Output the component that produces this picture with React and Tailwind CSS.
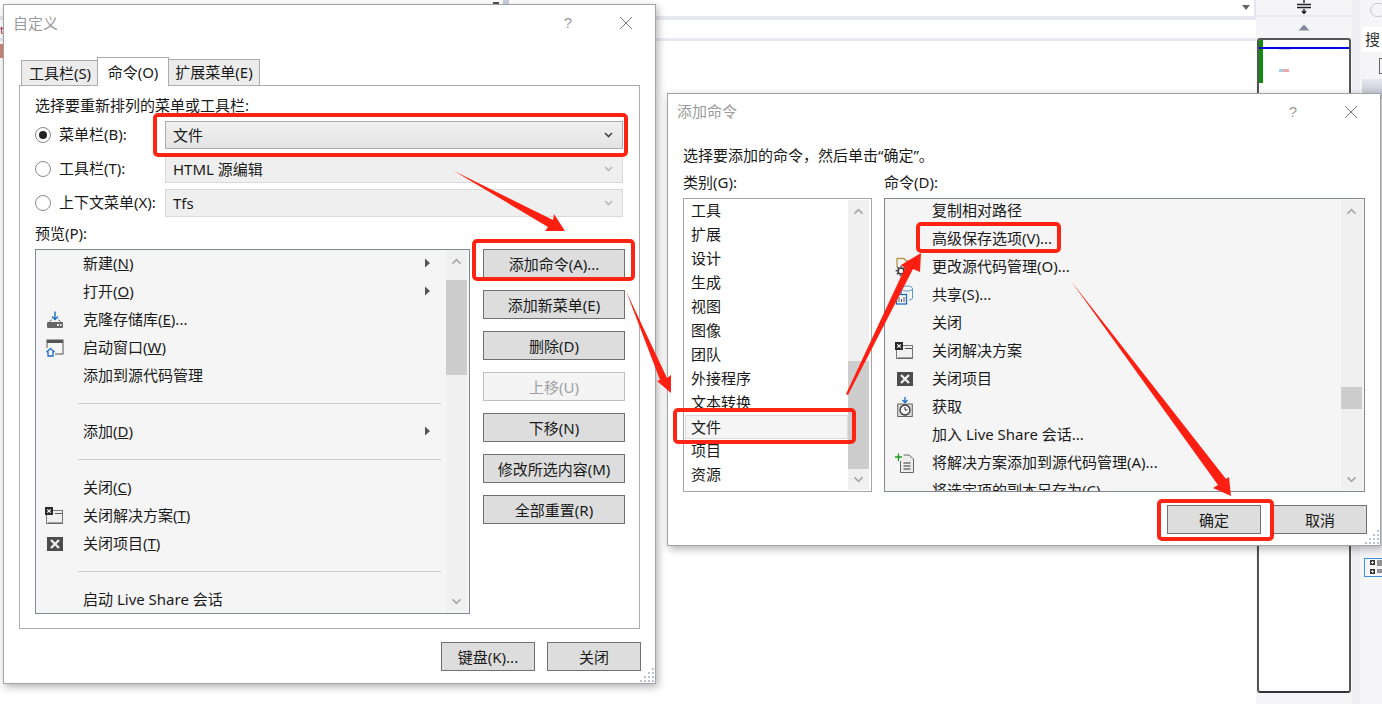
const FONT = "font-['Noto_Sans','Noto_Sans_CJK_SC',sans-serif]";

function Chevron({ dir = "down", color = "#a8a8a8", w = 2 }) {
  return (
    <svg width="11" height="7" viewBox="0 0 12 8" fill="none">
      <path d={dir === "down" ? "M1.5 1.5 L6 6 L10.5 1.5" : "M1.5 6.5 L6 2 L10.5 6.5"} stroke={color} strokeWidth={w} />
    </svg>
  );
}

function Btn({ children, disabled, className = "w-[142px]" }) {
  return (
    <div className={`${className} h-[29px] shrink-0 flex items-center justify-center border pt-[1px] text-[15px] ${disabled ? "bg-[#f4f4f4] border-[#bfbfbf] text-[#a0a0a0]" : "bg-[#dddddd] border-[#707070] text-[#1a1a1a]"}`}>
      {children}
    </div>
  );
}

function Radio({ on }) {
  return (
    <span className="w-4 h-4 shrink-0 rounded-full border border-[#8a8a8a] bg-white flex items-center justify-center">
      {on && <span className="w-2 h-2 rounded-full bg-[#222]" />}
    </span>
  );
}

function Combo({ text, active }) {
  return (
    <div className={`h-[28px] w-[458px] flex items-center justify-between pl-[7px] pr-[9px] border text-[15px] text-[#1a1a1a] ${active ? "border-[#acacac] bg-gradient-to-b from-[#f0f0f0] to-[#e4e4e4]" : "border-[#d9d9d9] bg-[#efefef]"}`}>
      <span>{text}</span>
      <svg width="9" height="6" viewBox="0 0 9 6" fill="none">
        <path d="M1 1 L4.5 4.5 L8 1" stroke={active ? "#444" : "#b8b8b8"} strokeWidth="1.6" />
      </svg>
    </div>
  );
}

function Arrow() {
  return <svg width="7" height="10" viewBox="0 0 7 10"><path d="M1 0.5 L6 5 L1 9.5 Z" fill="#555" /></svg>;
}

function Grip() {
  const pts = [[12, 0], [8, 4], [12, 4], [4, 8], [8, 8], [12, 8], [0, 12], [4, 12], [8, 12], [12, 12]];
  return (
    <svg className="absolute right-[1px] bottom-[1px]" width="14" height="14" viewBox="0 0 14 14">
      {pts.map(([x, y], i) => <rect key={i} x={x} y={y} width="2" height="2" fill="#b9c3d3" />)}
    </svg>
  );
}

function TitleBar({ title, className, titleClass }) {
  return (
    <div className={`${className} flex justify-between items-start text-[#9b9b9b]`}>
      <span className={`text-[15px] leading-5 ml-[9px] ${titleClass}`}>{title}</span>
      <div className="flex items-center gap-[47px] mr-[22px] mt-[8px]">
        <span className="text-[15px] leading-5 font-['Liberation_Sans',sans-serif]">?</span>
        <svg width="14" height="14" viewBox="0 0 14 14"><path d="M1 1 L13 13 M13 1 L1 13" stroke="#777" strokeWidth="1" fill="none" /></svg>
      </div>
    </div>
  );
}

function IconClone() {
  return (
    <svg width="18" height="18" viewBox="0 0 18 18" fill="none">
      <path d="M9 0.5 V8 M6 5.5 L9 8.5 L12 5.5" stroke="#1c6ec2" strokeWidth="1.4" />
      <rect x="1" y="11" width="16" height="6" rx="1" fill="#666" />
      <rect x="11" y="13" width="2" height="2" fill="#eee" /><rect x="14" y="13" width="1.5" height="2" fill="#eee" />
      <path d="M3 11 L5 9 H6 M12 9 H13 L15 11" stroke="#777" />
    </svg>
  );
}
function IconStart() {
  return (
    <svg width="18" height="18" viewBox="0 0 18 18" fill="none">
      <rect x="1" y="1" width="16" height="14" fill="#f5f5f5" stroke="#555" />
      <rect x="1" y="1" width="16" height="3" fill="#555" />
      <rect x="0" y="9" width="9" height="9" fill="#f5f5f5" />
      <path d="M0.5 13 L4.5 9.5 L8.5 13 M2 12.5 V17 H7 V12.5" stroke="#1c6ec2" strokeWidth="1.3" />
    </svg>
  );
}
function IconCloseSln() {
  return (
    <svg width="19" height="18" viewBox="0 0 19 18" fill="none">
      <rect x="1.5" y="3.5" width="16" height="13" fill="#f0f0f0" stroke="#777" />
      <path d="M10 6.5 H17 M3 16 H17" stroke="#555" strokeWidth="1" />
      <rect x="0" y="0" width="8" height="8" fill="#2a2a2a" />
      <path d="M2.3 2.3 L5.7 5.7 M5.7 2.3 L2.3 5.7" stroke="#fff" strokeWidth="1.2" />
    </svg>
  );
}
function IconCloseProj() {
  return (
    <svg width="16" height="14" viewBox="0 0 16 14" fill="none">
      <rect x="0" y="0" width="16" height="14" fill="#4c4c4c" />
      <path d="M4 3 L12 11 M12 3 L4 11" stroke="#eee" strokeWidth="2.4" />
    </svg>
  );
}
function IconFolderGear() {
  return (
    <svg width="20" height="20" viewBox="0 0 20 20" fill="none">
      <path d="M2 10 V1.5 H9 L11 4 H17 V9" stroke="#b99a55" strokeWidth="1.4" />
      <path d="M11 7 L13.5 9.5 L18 4" stroke="#3b9b3b" strokeWidth="1.4" />
      <circle cx="6" cy="14" r="3" stroke="#333" strokeWidth="1.6" />
      <circle cx="6" cy="14" r="4.7" stroke="#333" strokeWidth="1.2" strokeDasharray="1.5 2" />
    </svg>
  );
}
function IconShare() {
  return (
    <svg width="20" height="20" viewBox="0 0 20 20" fill="none">
      <ellipse cx="12" cy="3.5" rx="5.5" ry="2.5" stroke="#5a9ad2" />
      <path d="M6.5 3.5 V9 M17.5 3.5 V13 Q17.5 15 14 15" stroke="#5a9ad2" />
      <rect x="1.5" y="9.5" width="10" height="9.5" fill="#f5f5f5" stroke="#1c6ec2" strokeWidth="1.3" />
      <path d="M4 12 V17 M6.5 14 V17 M9 12 V17" stroke="#555" />
    </svg>
  );
}
function IconFetch() {
  return (
    <svg width="16" height="20" viewBox="0 0 16 20" fill="none">
      <path d="M8 0 V5 M5.5 3 L8 5.5 L10.5 3" stroke="#1c6ec2" strokeWidth="1.3" />
      <rect x="0.7" y="7" width="14.6" height="12.5" fill="#ddd" stroke="#666" />
      <circle cx="8" cy="13" r="5" fill="#f5f5f5" stroke="#333" strokeWidth="1.3" />
      <path d="M8 10 V13 H10.5" stroke="#333" />
    </svg>
  );
}
function IconAddDoc() {
  return (
    <svg width="20" height="20" viewBox="0 0 20 20" fill="none">
      <path d="M0 4 H7 M3.5 0.5 V8" stroke="#1a9a1a" strokeWidth="1.3" />
      <path d="M5.5 8 V19.5 H18.5 V6 L14 2 H8.5" fill="#eee" stroke="#666" />
      <path d="M8.5 10 H15.5 M8.5 13 H15.5 M8.5 16 H15.5" stroke="#333" strokeWidth="1.2" />
    </svg>
  );
}

function MenuRow({ icon, arrow, children }) {
  return (
    <div className="h-[28px] shrink-0 flex items-center text-[15px] text-[#1a1a1a] relative">
      <span className="w-[47px] flex justify-center items-center shrink-0 pr-[10px]">{icon}</span>
      <span className="whitespace-nowrap pb-[2px]">{children}</span>
      {arrow && <span className="absolute left-[388px] top-[8px] flex"><Arrow /></span>}
    </div>
  );
}
function Sep() {
  return <div className="h-[28px] shrink-0 flex items-center ml-[42px] w-[363px] pb-[2px]"><div className="w-full h-px bg-[#c9c9d3]" /></div>;
}

function Scroll({ thumbClass, topClass, botClass, className }) {
  return (
    <div className={`${className} w-[21px] flex flex-col bg-[#f0f0f0] shrink-0`}>
      <div className={`${topClass} shrink-0 flex justify-center pt-[8px]`}><Chevron dir="up" /></div>
      <div className={`${thumbClass} shrink-0 bg-[#cdcdcd]`} />
      <div className="flex-1" />
      <div className={`${botClass} shrink-0 flex justify-center items-center`}><Chevron /></div>
    </div>
  );
}

function RedBox({ className }) {
  return <div className={`absolute border-[4px] border-[#fd2414] rounded-[5px] ${className}`} />;
}

function CustomizeDialog() {
  return (
    <div className="absolute left-[3px] top-[4px] w-[653px] h-[680px] bg-white border border-[#a3a3a3] shadow-[2px_3px_8px_rgba(0,0,0,0.3)]">
      <TitleBar title="自定义" className="h-[52px]" titleClass="mt-[8px]" />
      <div className="flex items-end h-[29px] ml-[17px] text-[15px] text-[#1a1a1a] relative z-10">
        <div className="w-[76px] h-[26px] border border-[#acacac] border-r-0 bg-[#ececec] flex items-center justify-center pl-[1px]">工具栏(S)</div>
        <div className="w-[72px] h-[29px] border border-[#acacac] border-b-0 bg-white flex items-center justify-center">命令(O)</div>
        <div className="w-[91px] h-[27px] border border-[#acacac] border-l-0 bg-[#ececec] flex items-center justify-center">扩展菜单(E)</div>
      </div>
      <div className="ml-[15px] w-[621px] h-[544px] -mt-px border border-[#acacac] pl-[15px] pt-[9px] text-[15px] text-[#1a1a1a]">
        <div className="h-5 leading-5">选择要重新排列的菜单或工具栏:</div>
        <div className="mt-[6px] flex flex-col gap-[6px]">
          {[["菜单栏(B):", "文件", true], ["工具栏(T):", "HTML 源编辑", false], ["上下文菜单(X):", "Tfs", false]].map(([l, v, a]) => (
            <div key={l} className="grid grid-cols-[130px_458px] items-center">
              <div className="flex items-center gap-2"><Radio on={a} /><span className="pb-[2px]">{l}</span></div>
              <Combo text={v} active={a} />
            </div>
          ))}
        </div>
        <div className="h-5 leading-5 mt-[6px]">预览(P):</div>
        <div className="mt-[6px] flex gap-[13px]">
          <div className="w-[435px] h-[365px] border border-[#828790] bg-[#f5f5f5] flex overflow-hidden">
            <div className="w-[410px] flex flex-col shrink-0">
              <MenuRow arrow>新建(<u>N</u>)</MenuRow>
              <MenuRow arrow>打开(<u>O</u>)</MenuRow>
              <MenuRow icon={<IconClone />}>克隆存储库(<u>E</u>)...</MenuRow>
              <MenuRow icon={<IconStart />}>启动窗口(<u>W</u>)</MenuRow>
              <MenuRow>添加到源代码管理</MenuRow>
              <Sep />
              <MenuRow arrow>添加(<u>D</u>)</MenuRow>
              <Sep />
              <MenuRow>关闭(<u>C</u>)</MenuRow>
              <MenuRow icon={<IconCloseSln />}>关闭解决方案(<u>T</u>)</MenuRow>
              <MenuRow icon={<IconCloseProj />}>关闭项目(<u>T</u>)</MenuRow>
              <Sep />
              <MenuRow>启动 Live Share 会话</MenuRow>
            </div>
            <Scroll className="h-[361px]" topClass="h-[30px]" thumbClass="h-[95px]" botClass="h-[20px]" />
          </div>
          <div className="flex flex-col gap-[12px]">
            <Btn>添加命令(A)...</Btn>
            <Btn>添加新菜单(E)</Btn>
            <Btn>删除(D)</Btn>
            <Btn disabled>上移(U)</Btn>
            <Btn>下移(N)</Btn>
            <Btn>修改所选内容(M)</Btn>
            <Btn>全部重置(R)</Btn>
          </div>
        </div>
      </div>
      <div className="flex justify-end gap-[12px] mt-[13px] mr-[14px]">
        <Btn className="w-[94px]">键盘(K)...</Btn>
        <Btn className="w-[94px]">关闭</Btn>
      </div>
      <Grip />
    </div>
  );
}

function CmdRow({ icon, children }) {
  return (
    <div className="h-[28px] shrink-0 flex items-center text-[15px] text-[#1a1a1a] whitespace-nowrap">
      <span className="w-[47px] shrink-0 flex justify-center items-center pr-[8px]">{icon}</span>
      <span className="pb-[2px]">{children}</span>
    </div>
  );
}

function AddDialog() {
  const cats = ["工具", "扩展", "设计", "生成", "视图", "图像", "团队", "外接程序", "文本转换", "文件", "项目", "资源"];
  return (
    <div className="absolute left-[667px] top-[93px] w-[714px] h-[453px] bg-white border border-[#a3a3a3] shadow-[2px_3px_8px_rgba(0,0,0,0.3)] text-[15px] text-[#1a1a1a]">
      <TitleBar title="添加命令" className="h-[51px]" titleClass="mt-[7px]" />
      <div className="ml-[15px] h-5 leading-5">选择要添加的命令，然后单击“确定”。</div>
      <div className="ml-[15px] mt-[7px] grid grid-cols-[201px_481px] gap-y-[6px]">
        <div className="h-5 leading-5">类别(G):</div>
        <div className="h-5 leading-5">命令(D):</div>
        <div className="w-[189px] h-[294px] border border-[#a5a5a5] bg-white flex overflow-hidden">
          <div className="w-[164px] shrink-0 flex flex-col pl-px">
            {cats.map((c) => (
              <div key={c} className={`h-[24px] shrink-0 flex items-center text-[15px] ${c === "文件" ? "bg-[#f5f5f5] border border-[#dcdcdc] pl-[5px]" : "pl-[6px] pb-px"}`}>{c}</div>
            ))}
          </div>
          <Scroll className="h-[290px] mt-px" topClass="h-[161px]" thumbClass="h-[108px]" botClass="h-[21px]" />
        </div>
        <div className="w-[481px] h-[294px] border border-[#828790] bg-[#f5f5f5] flex overflow-hidden">
          <div className="w-[456px] shrink-0 flex flex-col -mt-[2px]">
            <CmdRow>复制相对路径</CmdRow>
            <CmdRow>高级保存选项(V)...</CmdRow>
            <CmdRow icon={<IconFolderGear />}>更改源代码管理(O)...</CmdRow>
            <CmdRow icon={<IconShare />}>共享(S)...</CmdRow>
            <CmdRow>关闭</CmdRow>
            <CmdRow icon={<IconCloseSln />}>关闭解决方案</CmdRow>
            <CmdRow icon={<IconCloseProj />}>关闭项目</CmdRow>
            <CmdRow icon={<IconFetch />}>获取</CmdRow>
            <CmdRow>加入 Live Share 会话...</CmdRow>
            <CmdRow icon={<IconAddDoc />}>将解决方案添加到源代码管理(A)...</CmdRow>
            <CmdRow>将选定项的副本另存为(C)...</CmdRow>
          </div>
          <Scroll className="h-[290px] mt-px" topClass="h-[187px]" thumbClass="h-[22px]" botClass="h-[21px]" />
        </div>
      </div>
      <div className="flex justify-end gap-[12px] mt-[13px] mr-[13px]">
        <Btn className="w-[94px]">确定</Btn>
        <Btn className="w-[94px]">取消</Btn>
      </div>
      <Grip />
    </div>
  );
}

function Backdrop() {
  return (
    <div className="w-full h-full flex bg-white">
      <div className="w-[1256px] shrink-0 flex flex-col relative">
        <div className="h-[16px] flex justify-end items-center pr-[3px] border-r-2 border-[#e4e4ee]">
          <svg width="10" height="6" viewBox="0 0 10 6"><path d="M1 0 L9 0 L5 5 Z" fill="#666" /></svg>
        </div>
        <div className="h-[4px] bg-[#e8e8f2]" />
        <div className="h-[18px] bg-white" />
        <div className="h-[3px] bg-[#e8e8f2]" />
        <div className="absolute left-0 top-[22px] text-[11px] leading-4 text-[#b0175e]">t</div>
        <div className="absolute left-0 top-[44px] w-[3px] h-[14px] bg-[#d08a7a]" />
        <div className="absolute left-[493px] top-[2px] w-[6px] h-[2px] bg-[#555]" />
        <div className="absolute left-[503px] top-0 w-[6px] h-[4px] bg-[#c9cfe3]" />
      </div>
      <div className="w-[96px] shrink-0 bg-[#f5f5f7] flex flex-col items-center">
        <div className="h-[17px] w-full flex justify-center border-b-2 border-[#e8e8ee]">
          <svg width="16" height="14" viewBox="0 0 16 14" fill="none"><path d="M1 4.5 H15 M1 7.5 H15 M8 0 V3 M8 9 V13 M6 11 L8 13.5 L10 11" stroke="#222" strokeWidth="1.4" /></svg>
        </div>
        <div className="h-[21px] flex items-center">
          <svg width="12" height="7" viewBox="0 0 12 7"><path d="M0.5 6.5 L6 0.5 L11.5 6.5 Z" fill="#8a8a9e" /></svg>
        </div>
        <div className="relative w-[94px] h-[655px] bg-white border-2 border-[#555] border-b-[#333] rounded-[3px] overflow-hidden">
          <div className="absolute left-0 top-0 w-[4px] h-[43px] bg-[#118c11]" />
          <div className="absolute left-0 top-[7px] w-full h-[2px] bg-[#0000dd]" />
          <div className="absolute left-[20px] top-[9px] w-[12px] h-[1px] bg-[#d8c8d8]" />
          <div className="absolute left-[20px] top-[29px] w-[4px] h-[3px] bg-[#a8d0ec]" />
          <div className="absolute left-[24px] top-[29px] w-[6px] h-[3px] bg-[#eaa8a8]" />
        </div>
      </div>
      <div className="w-[8px] shrink-0 bg-[#eeeef3]" />
      <div className="w-[22px] shrink-0 bg-[#f5f5f7] flex flex-col pl-[2px] relative">
        <div className="h-[27px] flex items-start pl-[8px] pt-[3px]">
          <span className="w-[16px] h-[14px] shrink-0 rounded-full border border-[#c8c8d0]" />
        </div>
        <div className="h-[25px] bg-white flex items-center pl-[3px] text-[15px] text-[#333] overflow-hidden whitespace-nowrap">搜</div>
        <div className="h-[27px] pl-[17px] pt-[6px]"><div className="w-[10px] h-[16px] shrink-0 border border-[#666]" /></div>
        <div className="h-[20px] bg-gradient-to-b from-[#e8e8f0] to-[#bcbccc]" />
        <div className="absolute left-[4px] top-[558px] w-[18px] h-[19px] border border-[#3d8fe0] border-r-0 bg-[#f5f5f7] overflow-hidden pl-[5px] pt-[1px]">
          <svg width="16" height="15" viewBox="0 0 16 15" fill="none">
            <rect x="0" y="0" width="5" height="5" fill="#333" /><rect x="0" y="9" width="5" height="5" fill="#333" />
            <path d="M1 2.5 H4 M2.5 1 V4 M1 11.5 H4 M2.5 10 V13" stroke="#fff" strokeWidth="0.8" />
            <path d="M7 1 H16 M7 3 H16 M7 5 H16 M7 10 H16 M7 12 H16" stroke="#333" />
          </svg>
        </div>
      </div>
    </div>
  );
}

function Annotations() {
  return (
    <>
      <RedBox className="left-[153px] top-[113px] w-[475px] h-[44px]" />
      <RedBox className="left-[472px] top-[239px] w-[163px] h-[42px]" />
      <RedBox className="left-[673px] top-[408px] w-[183px] h-[36px]" />
      <RedBox className="left-[916px] top-[222px] w-[145px] h-[31px]" />
      <RedBox className="left-[1157px] top-[499px] w-[117px] h-[42px]" />
      <svg className="absolute left-0 top-0 pointer-events-none" width="1382" height="704" viewBox="0 0 1382 704">
        <g fill="#fd2012">
          <polygon points="454,171 553,220 554,214 565,231 545,231 548,227" />
          <polygon points="626,291 667,378 671,375 671,393 657,381 660,380" />
          <polygon points="846,394 905,268 901,265 921,253 920,272 913,269 848,395" />
          <polygon points="1071,281 1226,479 1229,477 1231,496 1213,488 1218,485" />
        </g>
      </svg>
    </>
  );
}

export default function App() {
  return (
    <div className={`relative w-[1382px] h-[704px] overflow-hidden ${FONT}`}>
      <Backdrop />
      <CustomizeDialog />
      <AddDialog />
      <Annotations />
    </div>
  );
}
